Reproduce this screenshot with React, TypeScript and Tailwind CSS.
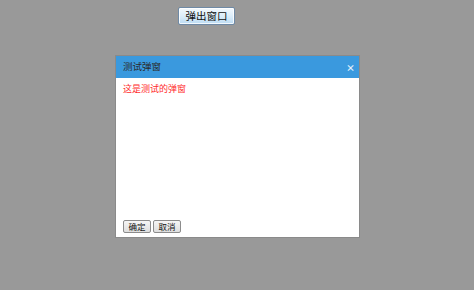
export default function App() {
  return (
    <div className="h-[290px] w-full overflow-hidden bg-[#999999] pt-[7px] font-['Microsoft_YaHei','Noto_Sans_CJK_SC',sans-serif]">
      <button className="ml-[178px] flex h-[18px] w-[57px] items-center justify-center rounded-[2px] border border-[#6f8aa6] bg-gradient-to-b from-[#f4f9fe] via-[#dcedfa] to-[#bcdcf3] text-[10.5px] leading-none text-[#111] shadow-[inset_0_0_0_1px_rgba(255,255,255,0.8)]">
        弹出窗口
      </button>

      <div className="ml-[115px] mt-[30px] flex h-[183px] w-[245px] flex-col border border-[#8a8a8a] bg-white">
        <div className="flex h-[22px] items-center justify-between bg-[#3a99de] pl-[7px] pr-[4px]">
          <span className="text-[9.5px] leading-none text-[#2a2a2a]">测试弹窗</span>
          <span className="text-[9px] font-bold leading-none text-[#e3f1ff]">×</span>
        </div>
        <div className="flex-1 px-[7px] pt-[6px]">
          <p className="text-[9px] leading-[10px] text-[#ff2b2b]">这是测试的弹窗</p>
        </div>
        <div className="flex gap-[2px] px-[7px] pb-[4px]">
          <button className="flex h-[13px] w-[28px] items-center justify-center rounded-[2px] border border-[#8c8c8c] bg-gradient-to-b from-[#f6f6f6] to-[#dedede] text-[8.5px] leading-none text-[#111]">
            确定
          </button>
          <button className="flex h-[13px] w-[28px] items-center justify-center rounded-[2px] border border-[#8c8c8c] bg-gradient-to-b from-[#f6f6f6] to-[#dedede] text-[8.5px] leading-none text-[#111]">
            取消
          </button>
        </div>
      </div>
    </div>
  );
}
